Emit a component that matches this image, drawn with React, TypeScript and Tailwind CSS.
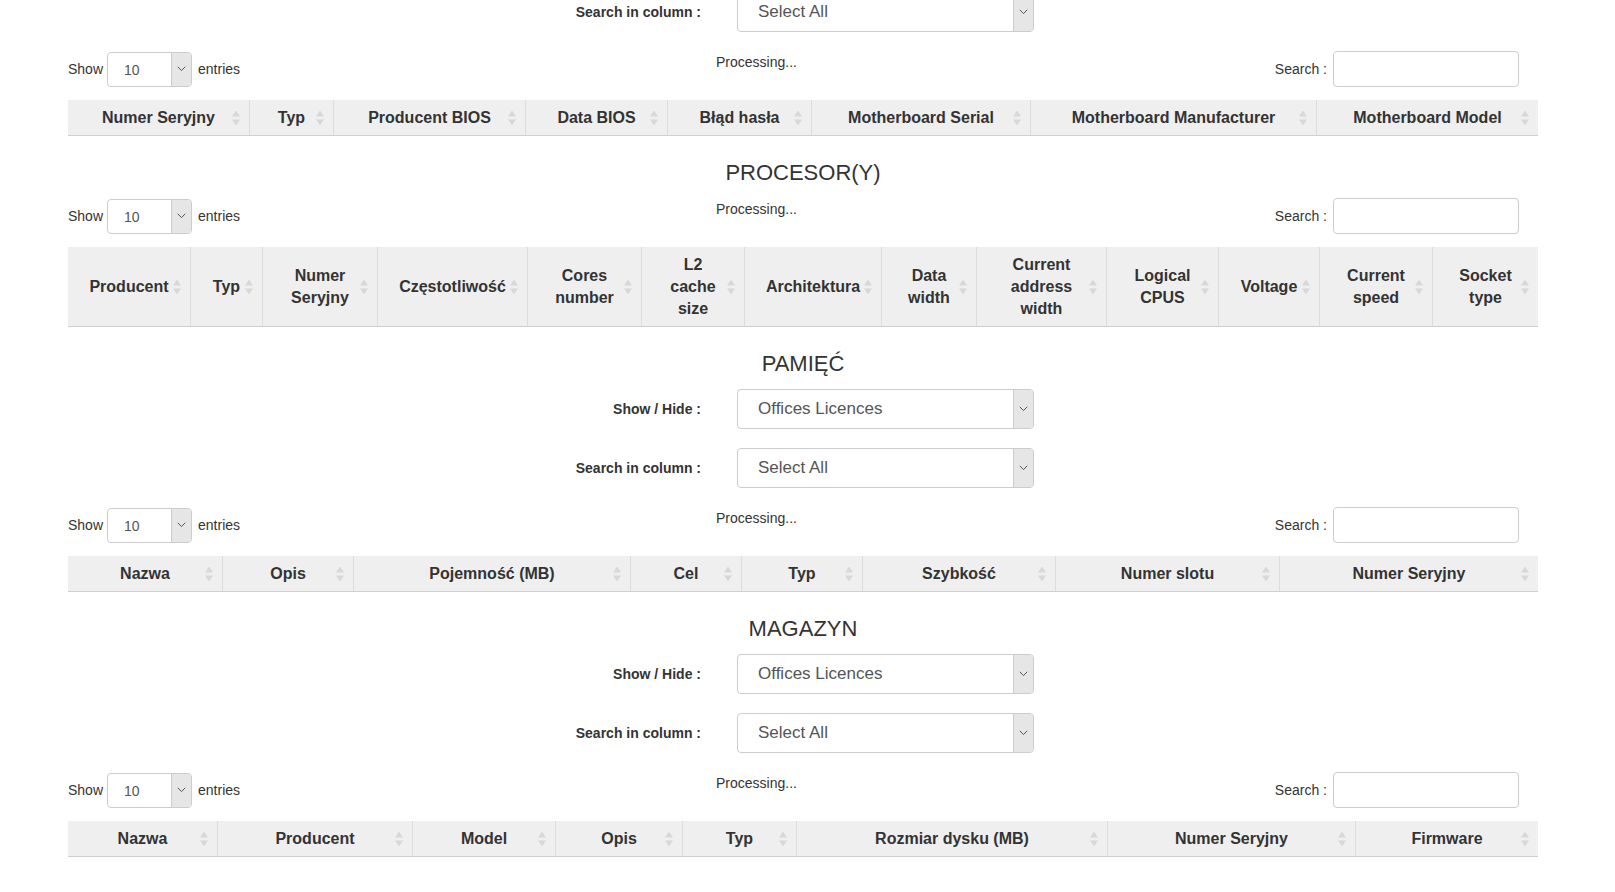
import React from 'react';

type Section = {
  title?: string;
  showHide: boolean;
  search: boolean;
  cols: { label: string; w: string }[];
};

const sections: Section[] = [
  {
    showHide: false,
    search: true,
    cols: [
      { label: 'Numer Seryjny', w: 'w-[182px]' },
      { label: 'Typ', w: 'w-[84px]' },
      { label: 'Producent BIOS', w: 'w-[192px]' },
      { label: 'Data BIOS', w: 'w-[142px]' },
      { label: 'Błąd hasła', w: 'w-[144px]' },
      { label: 'Motherboard Serial', w: 'w-[219px]' },
      { label: 'Motherboard Manufacturer', w: 'w-[286px]' },
      { label: 'Motherboard Model', w: 'w-[221px]' },
    ],
  },
  {
    title: 'PROCESOR(Y)',
    showHide: false,
    search: false,
    cols: [
      { label: 'Producent', w: 'w-[123px]' },
      { label: 'Typ', w: 'w-[72px]' },
      { label: 'Numer Seryjny', w: 'w-[115px]' },
      { label: 'Częstotliwość', w: 'w-[150px]' },
      { label: 'Cores number', w: 'w-[114px]' },
      { label: 'L2 cache size', w: 'w-[103px]' },
      { label: 'Architektura', w: 'w-[137px]' },
      { label: 'Data width', w: 'w-[95px]' },
      { label: 'Current address width', w: 'w-[130px]' },
      { label: 'Logical CPUS', w: 'w-[112px]' },
      { label: 'Voltage', w: 'w-[101px]' },
      { label: 'Current speed', w: 'w-[113px]' },
      { label: 'Socket type', w: 'w-[105px]' },
    ],
  },
  {
    title: 'PAMIĘĆ',
    showHide: true,
    search: true,
    cols: [
      { label: 'Nazwa', w: 'w-[155px]' },
      { label: 'Opis', w: 'w-[131px]' },
      { label: 'Pojemność (MB)', w: 'w-[277px]' },
      { label: 'Cel', w: 'w-[111px]' },
      { label: 'Typ', w: 'w-[121px]' },
      { label: 'Szybkość', w: 'w-[193px]' },
      { label: 'Numer slotu', w: 'w-[224px]' },
      { label: 'Numer Seryjny', w: 'w-[258px]' },
    ],
  },
  {
    title: 'MAGAZYN',
    showHide: true,
    search: true,
    cols: [
      { label: 'Nazwa', w: 'w-[150px]' },
      { label: 'Producent', w: 'w-[195px]' },
      { label: 'Model', w: 'w-[143px]' },
      { label: 'Opis', w: 'w-[127px]' },
      { label: 'Typ', w: 'w-[114px]' },
      { label: 'Rozmiar dysku (MB)', w: 'w-[311px]' },
      { label: 'Numer Seryjny', w: 'w-[248px]' },
      { label: 'Firmware', w: 'w-[182px]' },
    ],
  },
];

const Chevron = () => (
  <svg width="9" height="6" viewBox="0 0 9 6" fill="none">
    <path d="M0.8 0.8L4.5 4.6L8.2 0.8" stroke="#555" strokeWidth="1" />
  </svg>
);

const SortIcon = () => (
  <svg className="absolute right-[9px] top-1/2 -translate-y-1/2" width="8" height="15" viewBox="0 0 8 15">
    <path d="M4 0L8 6H0Z" fill="#d8d8d8" />
    <path d="M0 9H8L4 15Z" fill="#d8d8d8" />
  </svg>
);

function BigSelect({ value }: { value: string }) {
  return (
    <div className="ml-[36px] w-[297px] h-[40px] flex border border-[#cccccc] rounded-[4px] bg-white overflow-hidden">
      <div className="flex-1 flex items-center pl-[20px] text-[17px] text-[#555]">{value}</div>
      <div className="w-[20px] bg-[#e6e6e6] border-l border-[#cccccc] flex items-center justify-center">
        <Chevron />
      </div>
    </div>
  );
}

function LabeledSelect({ label, value, className }: { label: string; value: string; className: string }) {
  return (
    <div className={`flex items-center h-[40px] ${className}`}>
      <div className="w-[633px] text-right text-[14px] font-bold text-[#333]">{label}</div>
      <BigSelect value={value} />
    </div>
  );
}

function ShowRow({ className }: { className: string }) {
  return (
    <div className={`flex items-center w-[1451px] h-[36px] ${className}`}>
      <div className="w-[648px] flex items-center text-[14px] text-[#333]">
        <span>Show</span>
        <div className="ml-[4px] w-[85px] h-[35px] flex border border-[#cccccc] rounded-[4px] bg-white overflow-hidden">
          <div className="flex-1 flex items-center pl-[16px] pt-[2px] text-[14px] text-[#555]">10</div>
          <div className="w-[20px] bg-[#e6e6e6] border-l border-[#cccccc] flex items-center justify-center">
            <Chevron />
          </div>
        </div>
        <span className="ml-[6px]">entries</span>
      </div>
      <div className="self-start mt-[1px] leading-[20px] text-[14px] text-[#333]">Processing...</div>
      <div className="ml-auto flex items-center text-[14px] text-[#333]">
        <span className="mr-[6px]">Search :</span>
        <input className="w-[186px] h-[36px] border border-[#cccccc] rounded-[4px] bg-white outline-none" />
      </div>
    </div>
  );
}

function Header({ cols }: { cols: Section['cols'] }) {
  return (
    <div className="mt-[13px] flex w-[1470px] bg-[#efefef] border-b border-[#cfcfcf]">
      {cols.map((c, i) => (
        <div
          key={i}
          className={`${c.w} shrink-0 relative flex items-center justify-center text-center px-[20px] pt-[7px] pb-[6px] text-[16px] leading-[22px] font-bold text-[#333] ${i < cols.length - 1 ? 'border-r border-[#dcdcdc]' : ''}`}
        >
          {c.label}
          <SortIcon />
        </div>
      ))}
    </div>
  );
}

export default function App() {
  return (
    <div className="w-[1615px] h-[892px] overflow-hidden bg-white pl-[68px] font-['Liberation_Sans',Arial,sans-serif]">
      {sections.map((s, idx) => (
        <div key={idx} className="flex flex-col">
          {s.title && (
            <div className="mt-[25px] w-[1470px] h-[24px] leading-[24px] text-center text-[22px] text-[#333]">{s.title}</div>
          )}
          {s.showHide && <LabeledSelect label="Show / Hide :" value="Offices Licences" className="mt-[13px]" />}
          {s.search && (
            <LabeledSelect
              label="Search in column :"
              value="Select All"
              className={idx === 0 ? '-mt-[8px]' : 'mt-[19px]'}
            />
          )}
          <ShowRow className={s.search ? 'mt-[19px]' : 'mt-[13px]'} />
          <Header cols={s.cols} />
        </div>
      ))}
    </div>
  );
}
